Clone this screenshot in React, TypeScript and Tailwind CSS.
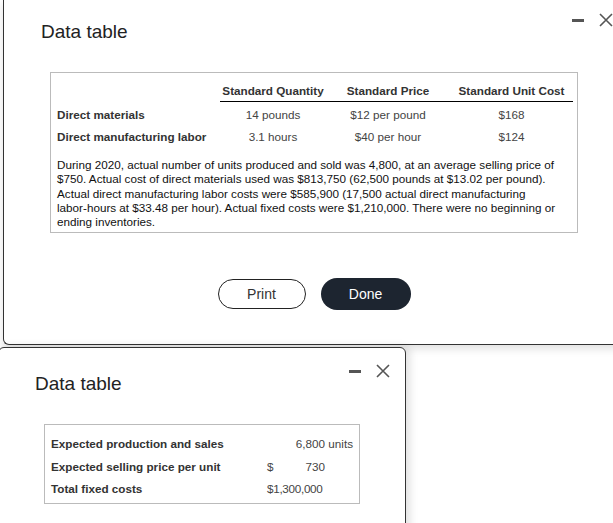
const font = "font-['Liberation_Sans',Arial,sans-serif]";

function WindowControls() {
  return (
    <div className="flex items-center gap-[15px]">
      <div className="w-[12px] h-[3px] bg-[#555]" />
      <svg width="14" height="14" viewBox="0 0 14 14" className="block">
        <path d="M1 1 L13 13 M13 1 L1 13" stroke="#555" strokeWidth="1.6" fill="none" />
      </svg>
    </div>
  );
}

const COSTS = [
  { label: "Direct materials", qty: "14 pounds", price: "$12 per pound", unit: "$168" },
  { label: "Direct manufacturing labor", qty: "3.1 hours", price: "$40 per hour", unit: "$124" },
];

export default function App() {
  return (
    <div className={`${font} w-[613px] h-[523px] overflow-hidden bg-white`}>
      {/* Top dialog */}
      <div className="ml-[3px] w-[630px] h-[345px] border-l border-b border-[#333] rounded-bl-[6px] bg-white shadow-[0_4px_8px_rgba(0,0,0,0.12)] flex flex-col">
        <div className="flex items-start justify-between w-[609px]">
          <h2 className="pt-[21px] pl-[37px] text-[19px] leading-[22px] text-[#222]">Data table</h2>
          <div className="pt-[13px]">
            <WindowControls />
          </div>
        </div>

        <div className="ml-[46px] mt-[29px] w-[528px] h-[161px] border border-[#bbb] pt-[9px] pl-[6px]">
          <div className="grid grid-cols-[163px_106px_124px_123px] text-[11.7px] leading-[14px]">
            <div className="h-[20px]" />
            <div className="h-[20px] pb-[3px] flex items-end justify-center font-bold text-[#333] border-b border-black">Standard Quantity</div>
            <div className="h-[20px] pb-[3px] flex items-end justify-center font-bold text-[#333] border-b border-black">Standard Price</div>
            <div className="h-[20px] pb-[3px] flex items-end justify-center font-bold text-[#333] border-b border-black">Standard Unit Cost</div>
            {COSTS.map((c, i) => (
              <div key={c.label} className="contents">
                <div className={`h-[22px] flex items-center font-bold text-[#333] ${i === 0 ? "mt-[2px]" : ""}`}>{c.label}</div>
                <div className={`h-[22px] flex items-center justify-center text-[#444] ${i === 0 ? "mt-[2px]" : ""}`}>{c.qty}</div>
                <div className={`h-[22px] flex items-center justify-center text-[#444] ${i === 0 ? "mt-[2px]" : ""}`}>{c.price}</div>
                <div className={`h-[22px] flex items-center justify-center text-[#444] ${i === 0 ? "mt-[2px]" : ""}`}>{c.unit}</div>
              </div>
            ))}
          </div>
          <p className="mt-[10px] text-[11.7px] leading-[14.3px] text-[#111] whitespace-nowrap">
            During 2020, actual number of units produced and sold was 4,800, at an average selling price of
            <br />
            $750. Actual cost of direct materials used was $813,750 (62,500 pounds at $13.02 per pound).
            <br />
            Actual direct manufacturing labor costs were $585,900 (17,500 actual direct manufacturing
            <br />
            labor-hours at $33.48 per hour). Actual fixed costs were $1,210,000. There were no beginning or
            <br />
            ending inventories.
          </p>
        </div>

        <div className="ml-[46px] mt-[45px] w-[528px] flex items-center justify-center gap-[15px]">
          <button className="w-[88px] h-[30px] rounded-full border-[1.5px] border-[#222] text-[14px] text-[#333] bg-white">
            Print
          </button>
          <button className="w-[90px] h-[32px] rounded-full bg-[#1d2530] text-[14px] text-white">
            Done
          </button>
        </div>
      </div>

      {/* Second dialog */}
      <div className="-ml-[2px] mt-[2px] w-[408px] h-[200px] border border-[#333] rounded-[6px] bg-white shadow-[4px_0_8px_rgba(0,0,0,0.12)]">
        <div className="flex items-start justify-between pr-[15px]">
          <h2 className="pt-[25px] pl-[36px] text-[19px] leading-[22px] text-[#222]">Data table</h2>
          <div className="pt-[16px]">
            <WindowControls />
          </div>
        </div>

        <div className="ml-[45px] mt-[29px] w-[316px] h-[80px] border border-[#bbb] pt-[8px] pl-[6px] pr-[6px] text-[11.7px] leading-[14px]">
          <div className="grid grid-cols-[216px_1fr] auto-rows-[22.5px]">
            <div className="flex items-center font-bold text-[#333]">Expected production and sales</div>
            <div className="flex items-center justify-end text-[#444]">6,800 units</div>
            <div className="flex items-center font-bold text-[#333]">Expected selling price per unit</div>
            <div className="flex items-center text-[#444]">
              <div className="w-[58px] flex justify-between">
                <span>$</span>
                <span>730</span>
              </div>
            </div>
            <div className="flex items-center font-bold text-[#333]">Total fixed costs</div>
            <div className="flex items-center text-[#444] tracking-[-0.3px]">$1,300,000</div>
          </div>
        </div>
      </div>
    </div>
  );
}
